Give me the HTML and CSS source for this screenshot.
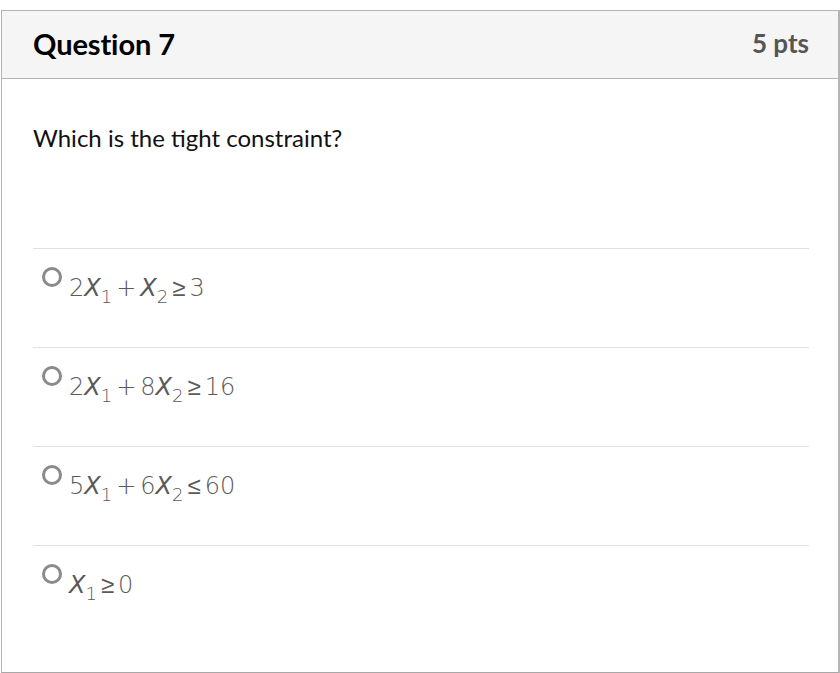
FILE: index.html
```html
<!DOCTYPE html>
<html>
<head>
<meta charset="utf-8">
<link rel="stylesheet" href="styles.css">
</head>
<body>
<div class="card">
  <div class="header">
    <span class="title">Question 7</span>
    <span class="pts">5 pts</span>
  </div>
  <div class="content">
    <p class="question">Which is the tight constraint?</p>
    <div class="answers">
      <div class="answer">
        <span class="radio"></span>
        <span class="math">2<i>X</i><sub>1</sub><span class="op">+</span><i>X</i><sub>2</sub><span class="rel">≥</span>3</span>
      </div>
      <div class="answer">
        <span class="radio"></span>
        <span class="math">2<i>X</i><sub>1</sub><span class="op">+</span>8<i>X</i><sub>2</sub><span class="rel">≥</span>16</span>
      </div>
      <div class="answer">
        <span class="radio"></span>
        <span class="math">5<i>X</i><sub>1</sub><span class="op">+</span>6<i>X</i><sub>2</sub><span class="rel">≤</span>60</span>
      </div>
      <div class="answer">
        <span class="radio"></span>
        <span class="math"><i>X</i><sub>1</sub><span class="rel">≥</span>0</span>
      </div>
    </div>
  </div>
</div>
</body>
</html>
```

FILE: styles.css
```css
html, body {
  margin: 0;
  padding: 0;
  background: #fff;
}
body {
  padding: 10px 1px 0 1px;
  font-family: Lato, "Liberation Sans", sans-serif;
}
.card {
  width: 836px;
  height: 661px;
  border: 1px solid #b4b4b4;
  border-bottom: 2px solid #a8a8a8;
  border-right: 2px solid #b4b4b4;
  box-sizing: content-box;
}
.header {
  height: 68px;
  background: #f5f5f5;
  border-bottom: 1px solid #b4b4b4;
  display: flex;
  align-items: center;
  justify-content: space-between;
  padding: 0 29px 3px 31px;
  box-sizing: border-box;
}
.title {
  font-weight: 700;
  font-size: 29px;
  color: #000;
  letter-spacing: -0.1px;
}
.pts {
  font-weight: 700;
  font-size: 26px;
  color: #555;
}
.content {
  padding: 0 29px 0 31px;
}
.question {
  margin: 0;
  padding-top: 44px;
  height: 125px;
  box-sizing: content-box;
  font-size: 24px;
  color: #111;
  line-height: 30px;
}
.answer {
  border-top: 1px solid #e0e0e0;
  height: 98px;
  display: flex;
  align-items: flex-start;
}
.radio {
  width: 14px;
  height: 14px;
  border: 3px solid #8a8a8a;
  border-radius: 50%;
  margin: 18px 0 0 9px;
  flex: none;
}
.math {
  margin: 24px 0 0 7px;
  font-family: "DejaVu Sans", Verdana, sans-serif;
  font-size: 24px;
  color: #5a5a5a;
  font-weight: 200;
  line-height: 30px;
}
.math i {
  font-style: italic;
}
.math sub {
  font-size: 18px;
  vertical-align: -7px;
  line-height: 0;
}
.op, .rel {
  margin: 0 4px;
}
```
